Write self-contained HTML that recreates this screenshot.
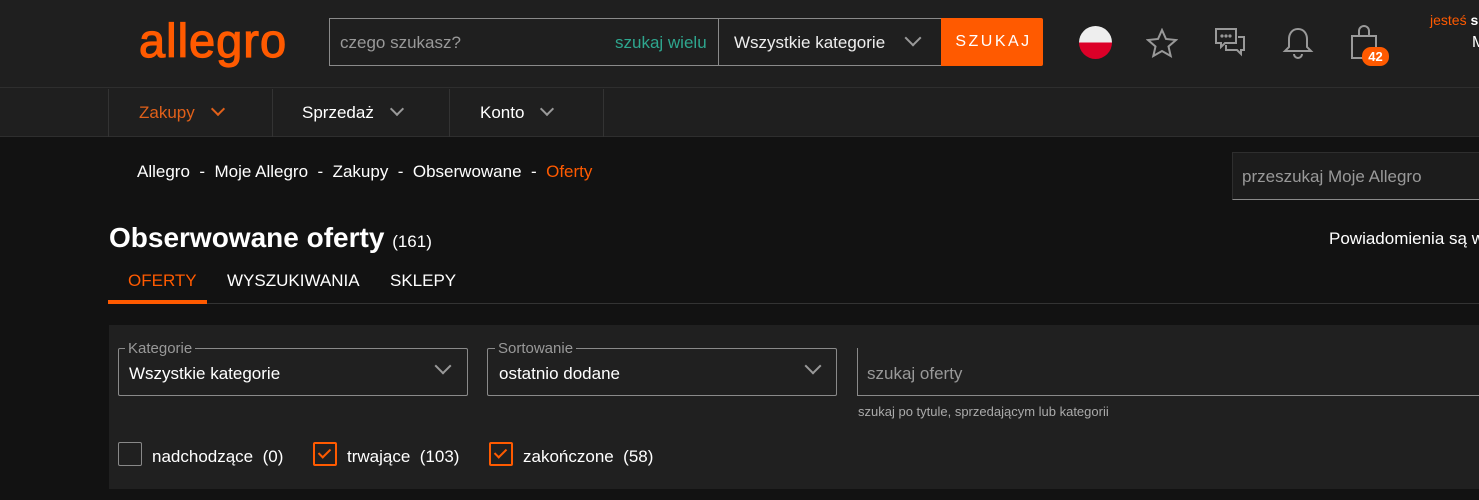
<!DOCTYPE html>
<html><head><meta charset="utf-8"><style>
*{margin:0;padding:0;box-sizing:border-box}
body{width:1479px;height:500px;overflow:hidden;background:#121212;font-family:"Liberation Sans",sans-serif;color:#fff;position:relative}
.a{position:absolute;white-space:nowrap}
#hdr{position:absolute;left:0;top:0;width:1479px;height:88px;background:#1f1f1f;border-bottom:1px solid #2e2e2e}
#nav{position:absolute;left:0;top:88px;width:1479px;height:49px;background:#1f1f1f;border-bottom:1px solid #2e2e2e}
.ni{position:absolute;top:0;height:48px;border-left:1px solid #333;font-size:17px;line-height:48px}
.chev{display:inline-block;width:10px;height:10px;border-right:2px solid #999;border-bottom:2px solid #999;transform:rotate(45deg);margin-left:18px;position:relative;top:-4px}
</style></head><body>
<div id="hdr"></div>
<div class="a" style="left:139px;top:13px;font-size:47px;color:#ff5a00;letter-spacing:1px;-webkit-text-stroke:1.2px #ff5a00">allegro</div>
<div class="a" style="left:329px;top:18px;width:390px;height:48px;border:1px solid #8a8a8a;border-right:none"></div>
<div class="a" style="left:340px;top:33px;font-size:17px;color:#999">czego szukasz?</div>
<div class="a" style="left:615px;top:33px;font-size:17px;color:#2ea68e">szukaj wielu</div>
<div class="a" style="left:718px;top:18px;width:224px;height:48px;border:1px solid #8a8a8a"></div>
<div class="a" style="left:734px;top:33px;font-size:17px;color:#eee">Wszystkie kategorie</div>
<div class="a" style="left:907px;top:32px;width:12px;height:12px;border-right:2px solid #999;border-bottom:2px solid #999;transform:rotate(45deg)"></div>
<div class="a" style="left:941px;top:18px;width:102px;height:48px;background:#ff5a00;border-radius:0 2px 2px 0;font-size:16px;line-height:48px;text-align:center;letter-spacing:2.5px;padding-left:3px">SZUKAJ</div>
<div class="a" style="left:1079px;top:26px;width:33px;height:33px;border-radius:50%;background:linear-gradient(#eee 50%,#dc0028 50%)"></div>
<svg class="a" style="left:1146px;top:28px" width="32" height="30" viewBox="0 0 32 30"><path d="M16 2l4 9 10 1-7.5 6.5 2.2 9.5L16 23l-8.7 5 2.2-9.5L2 12l10-1z" fill="none" stroke="#999" stroke-width="2"/></svg>
<svg class="a" style="left:1214px;top:27px" width="32" height="32" viewBox="0 0 32 32" fill="none" stroke="#999" stroke-width="2"><path d="M2 2h20v14H11l-4 4v-4H2z"/><path d="M24 10h6v13h-3v4l-4-4H12v-5"/><circle cx="8" cy="9" r=".6" fill="#999"/><circle cx="12" cy="9" r=".6" fill="#999"/><circle cx="16" cy="9" r=".6" fill="#999"/></svg>
<svg class="a" style="left:1282px;top:25px" width="32" height="34" viewBox="0 0 32 34" fill="none" stroke="#999" stroke-width="2"><path d="M16 4c-6 0-9 5-9 10v8l-4 4h26l-4-4v-8c0-5-3-10-9-10z"/><path d="M12 29a4 4 0 0 0 8 0"/></svg>
<svg class="a" style="left:1350px;top:24px" width="30" height="36" viewBox="0 0 30 36" fill="none" stroke="#999" stroke-width="2"><rect x="2" y="12" width="24" height="22"/><path d="M9 12V7a5 5 0 0 1 10 0v5"/></svg>
<div class="a" style="left:1362px;top:47px;width:27px;height:19px;border-radius:9px;background:#ff5a00;font-size:13px;font-weight:bold;line-height:19px;text-align:center">42</div>
<div class="a" style="left:1430px;top:12px;font-size:14px;color:#ff5a00">jesteś <b style="color:#fff">s</b></div>
<div class="a" style="left:1472px;top:34px;font-size:16px">M</div>
<div id="nav"></div>
<div class="ni" style="left:108px;top:89px;width:165px;color:#e0601a;padding-left:30px">Zakupy<span class="chev" style="border-color:#e0601a"></span></div>
<div class="ni" style="left:272px;top:89px;width:178px;padding-left:29px">Sprzedaż<span class="chev"></span></div>
<div class="ni" style="left:449px;top:89px;width:155px;padding-left:30px;border-right:1px solid #333">Konto<span class="chev"></span></div>
<div class="a" style="left:137px;top:162px;font-size:17px">Allegro &nbsp;-&nbsp; Moje Allegro &nbsp;-&nbsp; Zakupy &nbsp;-&nbsp; Obserwowane &nbsp;-&nbsp; <span style="color:#ff5a00">Oferty</span></div>
<div class="a" style="left:1232px;top:152px;width:260px;height:48px;background:#1c1c1c;border:1px solid #2e2e2e;border-bottom:1px solid #8a8a8a;border-right:none;font-size:17px;line-height:48px;padding-left:9px;color:#999">przeszukaj Moje Allegro</div>
<div class="a" style="left:109px;top:222px;font-size:28px;font-weight:bold">Obserwowane oferty <span style="font-size:17px;font-weight:normal">(161)</span></div>
<div class="a" style="left:1329px;top:229px;font-size:17px">Powiadomienia są w</div>
<div class="a" style="left:128px;top:271px;font-size:17px;color:#ff5a00">OFERTY</div>
<div class="a" style="left:227px;top:271px;font-size:17px">WYSZUKIWANIA</div>
<div class="a" style="left:390px;top:271px;font-size:17px">SKLEPY</div>
<div class="a" style="left:109px;top:303px;width:1370px;height:1px;background:#333"></div>
<div class="a" style="left:108px;top:300px;width:99px;height:4px;background:#ff5a00"></div>
<div class="a" style="left:109px;top:325px;width:1370px;height:164px;background:#202020"></div>
<div class="a" style="left:118px;top:348px;width:350px;height:48px;border:1px solid #8a8a8a;border-radius:2px"></div>
<div class="a" style="left:125px;top:340px;font-size:15px;color:#999;background:#202020;padding:0 3px">Kategorie</div>
<div class="a" style="left:129px;top:364px;font-size:17px">Wszystkie kategorie</div>
<div class="a" style="left:437px;top:360px;width:12px;height:12px;border-right:2px solid #999;border-bottom:2px solid #999;transform:rotate(45deg)"></div>
<div class="a" style="left:487px;top:348px;width:350px;height:48px;border:1px solid #8a8a8a;border-radius:2px"></div>
<div class="a" style="left:495px;top:340px;font-size:15px;color:#999;background:#202020;padding:0 3px">Sortowanie</div>
<div class="a" style="left:499px;top:364px;font-size:17px">ostatnio dodane</div>
<div class="a" style="left:807px;top:360px;width:12px;height:12px;border-right:2px solid #999;border-bottom:2px solid #999;transform:rotate(45deg)"></div>
<div class="a" style="left:857px;top:348px;width:630px;height:48px;border-left:1px solid #8a8a8a;border-bottom:1px solid #8a8a8a"></div>
<div class="a" style="left:867px;top:364px;font-size:17px;color:#999">szukaj oferty</div>
<div class="a" style="left:858px;top:404px;font-size:13px;color:#aaa">szukaj po tytule, sprzedającym lub kategorii</div>
<div class="a" style="left:118px;top:442px;width:24px;height:24px;border:1px solid #888;border-radius:2px"></div>
<div class="a" style="left:152px;top:447px;font-size:17px">nadchodzące &nbsp;(0)</div>
<div class="a" style="left:313px;top:442px;width:24px;height:24px;border:2px solid #ff5a00;border-radius:2px"></div>
<div class="a" style="left:321px;top:446px;width:7px;height:12px;border-right:2px solid #ff5a00;border-bottom:2px solid #ff5a00;transform:rotate(45deg)"></div>
<div class="a" style="left:347px;top:447px;font-size:17px">trwające &nbsp;(103)</div>
<div class="a" style="left:489px;top:442px;width:24px;height:24px;border:2px solid #ff5a00;border-radius:2px"></div>
<div class="a" style="left:497px;top:446px;width:7px;height:12px;border-right:2px solid #ff5a00;border-bottom:2px solid #ff5a00;transform:rotate(45deg)"></div>
<div class="a" style="left:523px;top:447px;font-size:17px">zakończone &nbsp;(58)</div>
</body></html>
